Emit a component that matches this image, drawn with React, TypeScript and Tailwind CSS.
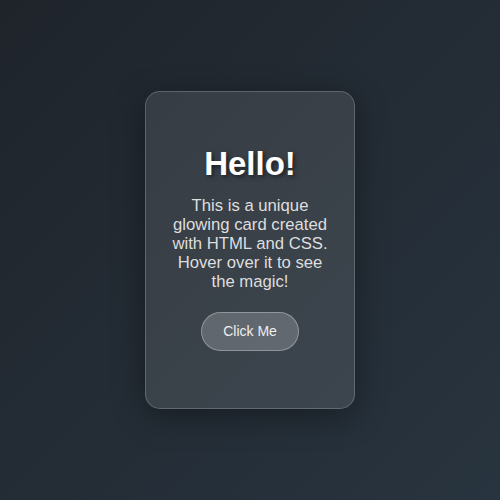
export default function App() {
  return (
    <div
      className="flex h-[500px] w-[500px] items-center justify-center bg-gradient-to-br from-[#1f242b] to-[#28343f]"
      style={{ fontFamily: '"Liberation Sans", Arial, sans-serif' }}
    >
      <div className="flex w-[210px] flex-col items-center rounded-[15px] border border-white/20 bg-white/10 px-5 pt-[53px] pb-[57px] text-center shadow-[0_8px_32px_rgba(0,0,0,0.37)]">
        <h1 className="text-[33px] font-bold leading-[38px] text-white [text-shadow:2px_2px_4px_rgba(0,0,0,0.5)]">
          Hello!
        </h1>
        <p className="mt-[13px] text-[16.7px] leading-[19px] text-[#dedede]">
          This is a unique glowing card created with HTML and CSS. Hover over it to see the magic!
        </p>
        <button className="mt-[21px] h-[39px] w-[98px] rounded-full border border-white/30 bg-white/20 text-[14px] text-[#eeeeee]">
          Click Me
        </button>
      </div>
    </div>
  )
}
